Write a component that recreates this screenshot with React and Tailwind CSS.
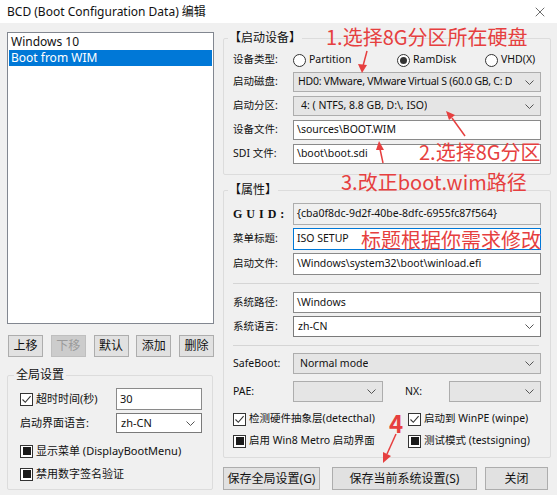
import React from "react";
import { X } from "lucide-react";

const font = { fontFamily: '"Segoe UI", "Noto Sans", "Noto Sans CJK SC", sans-serif' };

function Chevron() {
    return (
        <svg width="9" height="5" viewBox="0 0 9 5">
            <path d="M0.5 0.5 L4.5 4.5 L8.5 0.5" fill="none" stroke="#555" strokeWidth="1" />
        </svg>
    );
}

function Combo({ text, white, className = "" }) {
    return (
        <div
            className={`h-full flex items-center justify-between pl-[4px] pr-[6px] border whitespace-nowrap overflow-hidden ${white ? "bg-white border-[#7a7a7a]" : "bg-[#e5e5e5] border-[#adadad]"} ${className}`}
        >
            <span className="overflow-hidden">{text}</span>
            <span className="ml-1 shrink-0">
                <Chevron />
            </span>
        </div>
    );
}

function Input({ text, className = "" }) {
    return (
        <div className={`h-full flex items-center pl-[3px] border whitespace-nowrap overflow-hidden ${className || "bg-white border-[#8a8a8a]"}`}>
            {text}
        </div>
    );
}

function Check({ mode }) {
    return (
        <span className="w-[13px] h-[13px] shrink-0 border border-[#333] bg-white flex items-center justify-center">
            {mode === "check" ? (
                <svg width="11" height="11" viewBox="0 0 11 11">
                    <path d="M1.5 5.5 L4.3 8.3 L9.6 2.2" fill="none" stroke="#333" strokeWidth="1.1" />
                </svg>
            ) : (
                <span className="w-[8px] h-[8px] bg-[#1a1a1a]" />
            )}
        </span>
    );
}

function Radio({ on, label, className = "" }) {
    return (
        <div className={`flex items-center ${className}`}>
            <span className="w-[13px] h-[13px] rounded-full border border-[#333] bg-white flex items-center justify-center">
                {on && <span className="w-[7px] h-[7px] rounded-full bg-[#333]" />}
            </span>
            <span className="ml-[3px]">{label}</span>
        </div>
    );
}

function Btn({ children, w, disabled }) {
    return (
        <button
            className={`h-full ${w} border text-[12px] flex items-center justify-center ${disabled ? "bg-[#cccccc] border-[#bfbfbf] text-[#9a9a9a]" : "bg-[#e1e1e1] border-[#adadad] text-[#111]"}`}
        >
            {children}
        </button>
    );
}

function Row({ label, children, className = "h-[20px]", labelClass = "" }) {
    return (
        <div className={`flex items-center ${className}`}>
            <span className={`w-[60px] shrink-0 ${labelClass}`}>{label}</span>
            <div className="w-[248px] h-full">{children}</div>
        </div>
    );
}

export default function App() {
    return (
        <div className="w-[557px] h-[495px] relative bg-[#f0f0f0] overflow-hidden text-[10.5px] text-[#111]" style={font}>
            {/* title bar */}
            <div className="h-[23px] bg-white flex items-center justify-between pl-[7px] pr-[9px] text-[12px]">
                <span>BCD (Boot Configuration Data) 编辑</span>
                <X size={16} strokeWidth={1} color="#222" />
            </div>

            <div className="flex">
                {/* left column */}
                <div className="w-[207px] ml-[7px] mt-[9px] flex flex-col">
                    <div className="h-[292px] border border-[#828790] bg-white p-[1px] text-[12px]">
                        <div className="h-[16px] leading-[16px] pl-[2px]">Windows 10</div>
                        <div className="h-[16px] leading-[16px] pl-[2px] bg-[#0078d7] text-white">Boot from WIM</div>
                    </div>

                    <div className="mt-[11px] h-[22px] w-[206px] ml-[1px] flex justify-between">
                        <Btn w="w-[35px]">上移</Btn>
                        <Btn w="w-[35px]" disabled>下移</Btn>
                        <Btn w="w-[35px]">默认</Btn>
                        <Btn w="w-[35px]">添加</Btn>
                        <Btn w="w-[35px]">删除</Btn>
                    </div>

                    <fieldset className="mt-[10px] h-[123px] w-[206px] border border-[#dcdcdc] rounded-[2px]">
                        <legend className="ml-[6px] px-[2px] text-[12px] leading-[16px]">全局设置</legend>
                        <div className="pt-[5px] pl-[12px] text-[11px]">
                            <div className="h-[22px] flex items-center">
                                <div className="w-[96px] flex items-center">
                                    <Check mode="check" />
                                    <span className="ml-[3px]">超时时间(秒)</span>
                                </div>
                                <div className="w-[86px] h-full">
                                    <Input text="30" />
                                </div>
                            </div>
                            <div className="mt-[3px] h-[20px] flex items-center">
                                <span className="w-[96px]">启动界面语言:</span>
                                <div className="w-[86px] h-full">
                                    <Combo text="zh-CN" white />
                                </div>
                            </div>
                            <div className="mt-[11px] h-[14px] flex items-center">
                                <Check mode="fill" />
                                <span className="ml-[3px]">显示菜单 (DisplayBootMenu)</span>
                            </div>
                            <div className="mt-[9px] h-[14px] flex items-center">
                                <Check mode="fill" />
                                <span className="ml-[3px]">禁用数字签名验证</span>
                            </div>
                        </div>
                    </fieldset>
                </div>

                {/* right column */}
                <div className="w-[328px] ml-[9px] mt-[7px] flex flex-col">
                    <fieldset className="h-[145px] border border-[#dcdcdc] rounded-[2px]">
                        <legend className="ml-[4px] px-[1px] text-[12px] leading-[16px]">【启动设备】</legend>
                        <div className="pt-[4px] pl-[9px]">
                            <Row label="设备类型:">
                                <div className="flex items-center h-full">
                                    <Radio label="Partition" className="w-[104px]" />
                                    <Radio label="RamDisk" on className="w-[88px]" />
                                    <Radio label="VHD(X)" />
                                </div>
                            </Row>
                            <Row label="启动磁盘:" className="mt-[2px] h-[20px]">
                                <Combo text="HD0: VMware, VMware Virtual S (60.0 GB, C: D" className="tracking-[-0.25px]" />
                            </Row>
                            <Row label="启动分区:" className="mt-[4px] h-[20px]">
                                <Combo text="4: ( NTFS,  8.8 GB, D:\, ISO)" className="pl-[7px]" />
                            </Row>
                            <Row label="设备文件:" className="mt-[4px] h-[20px]">
                                <Input text="\sources\BOOT.WIM" />
                            </Row>
                            <Row label="SDI 文件:" className="mt-[4px] h-[20px]">
                                <Input text="\boot\boot.sdi" />
                            </Row>
                        </div>
                    </fieldset>

                    <fieldset className="mt-[7px] h-[276px] border border-[#dcdcdc] rounded-[2px]">
                        <legend className="ml-[4px] px-[1px] text-[12px] leading-[16px]">【属性】</legend>
                        <div className="pt-[5px] pl-[9px] pr-[9px]">
                            <Row
                                label="GUID:"
                                className="h-[22px]"
                                labelClass="font-bold tracking-[4px] text-[12px] [font-family:'Liberation_Serif',serif]"
                            >
                                <Input text="{cba0f8dc-9d2f-40be-8dfc-6955fc87f564}" className="bg-[#f0f0f0] border-[#adadad]" />
                            </Row>
                            <Row label="菜单标题:" className="mt-[3px] h-[22px]">
                                <Input text="ISO SETUP" className="bg-white border-[#0078d7]" />
                            </Row>
                            <Row label="启动文件:" className="mt-[3px] h-[22px]">
                                <Input text="\Windows\system32\boot\winload.efi" />
                            </Row>
                            <div className="mt-[8px] h-[1px] w-[306px] bg-[#d5d5d5]" />
                            <Row label="系统路径:" className="mt-[8px] h-[21px]">
                                <Input text="\Windows" />
                            </Row>
                            <Row label="系统语言:" className="mt-[3px] h-[21px]">
                                <Combo text="zh-CN" white />
                            </Row>
                            <div className="mt-[8px] h-[1px] w-[306px] bg-[#d5d5d5]" />
                            <Row label="SafeBoot:" className="mt-[7px] h-[21px]">
                                <Combo text="Normal mode" className="pl-[6px]" />
                            </Row>
                            <div className="mt-[7px] h-[21px] flex items-center">
                                <span className="w-[60px]">PAE:</span>
                                <div className="w-[90px] h-full">
                                    <Combo text="" />
                                </div>
                                <span className="ml-[22px] w-[44px]">NX:</span>
                                <div className="w-[92px] h-full">
                                    <Combo text="" />
                                </div>
                            </div>
                            <div className="mt-[10px] h-[14px] flex items-center">
                                <div className="w-[175px] flex items-center">
                                    <Check mode="check" />
                                    <span className="ml-[3px] whitespace-nowrap">检测硬件抽象层(detecthal)</span>
                                </div>
                                <Check mode="check" />
                                <span className="ml-[3px]">启动到 WinPE (winpe)</span>
                            </div>
                            <div className="mt-[8px] h-[14px] flex items-center">
                                <div className="w-[175px] flex items-center">
                                    <Check mode="fill" />
                                    <span className="ml-[3px] whitespace-nowrap">启用 Win8 Metro 启动界面</span>
                                </div>
                                <Check mode="fill" />
                                <span className="ml-[3px]">测试模式 (testsigning)</span>
                            </div>
                        </div>
                    </fieldset>

                    <div className="mt-[9px] h-[23px] flex">
                        <Btn w="w-[97px]">保存全局设置(G)</Btn>
                        <div className="ml-[12px] h-full">
                            <Btn w="w-[145px]">保存当前系统设置(S)</Btn>
                        </div>
                        <div className="ml-[8px] h-full">
                            <Btn w="w-[63px]">关闭</Btn>
                        </div>
                    </div>
                </div>
            </div>

            {/* red annotations */}
            <div className="absolute inset-0 pointer-events-none text-[#e63f3f] [font-family:'Noto_Sans_CJK_SC',sans-serif]">
                <span className="absolute left-[326px] top-[25px] text-[20px] leading-[24px] whitespace-nowrap">1.选择8G分区所在硬盘</span>
                <span className="absolute left-[419px] top-[140px] text-[20px] leading-[24px] whitespace-nowrap">2.选择8G分区</span>
                <span className="absolute left-[341px] top-[170px] text-[20px] leading-[24px] whitespace-nowrap">3.改正boot.wim路径</span>
                <span className="absolute left-[361px] top-[228px] text-[20px] leading-[24px] whitespace-nowrap">标题根据你需求修改</span>
                <span className="absolute left-[389px] top-[409px] text-[24px] leading-[28px] font-bold">4</span>
                <svg className="absolute left-0 top-0" width="557" height="495" viewBox="0 0 557 495">
                    <g stroke="#e63f3f" strokeWidth="1.5" fill="#e63f3f">
                        <line x1="367" y1="51" x2="363" y2="66" />
                        <polygon points="358,64 362,73 367,65" stroke="none" />
                        <line x1="465" y1="136" x2="452" y2="118" />
                        <polygon points="446,111 455,115 449,120" stroke="none" />
                        <line x1="383" y1="163" x2="380" y2="149" />
                        <polygon points="379,141 384,150 376,150" stroke="none" />
                        <line x1="396" y1="434" x2="387" y2="454" />
                        <polygon points="383,463 383,452 391,456" stroke="none" />
                    </g>
                </svg>
            </div>
        </div>
    );
}
